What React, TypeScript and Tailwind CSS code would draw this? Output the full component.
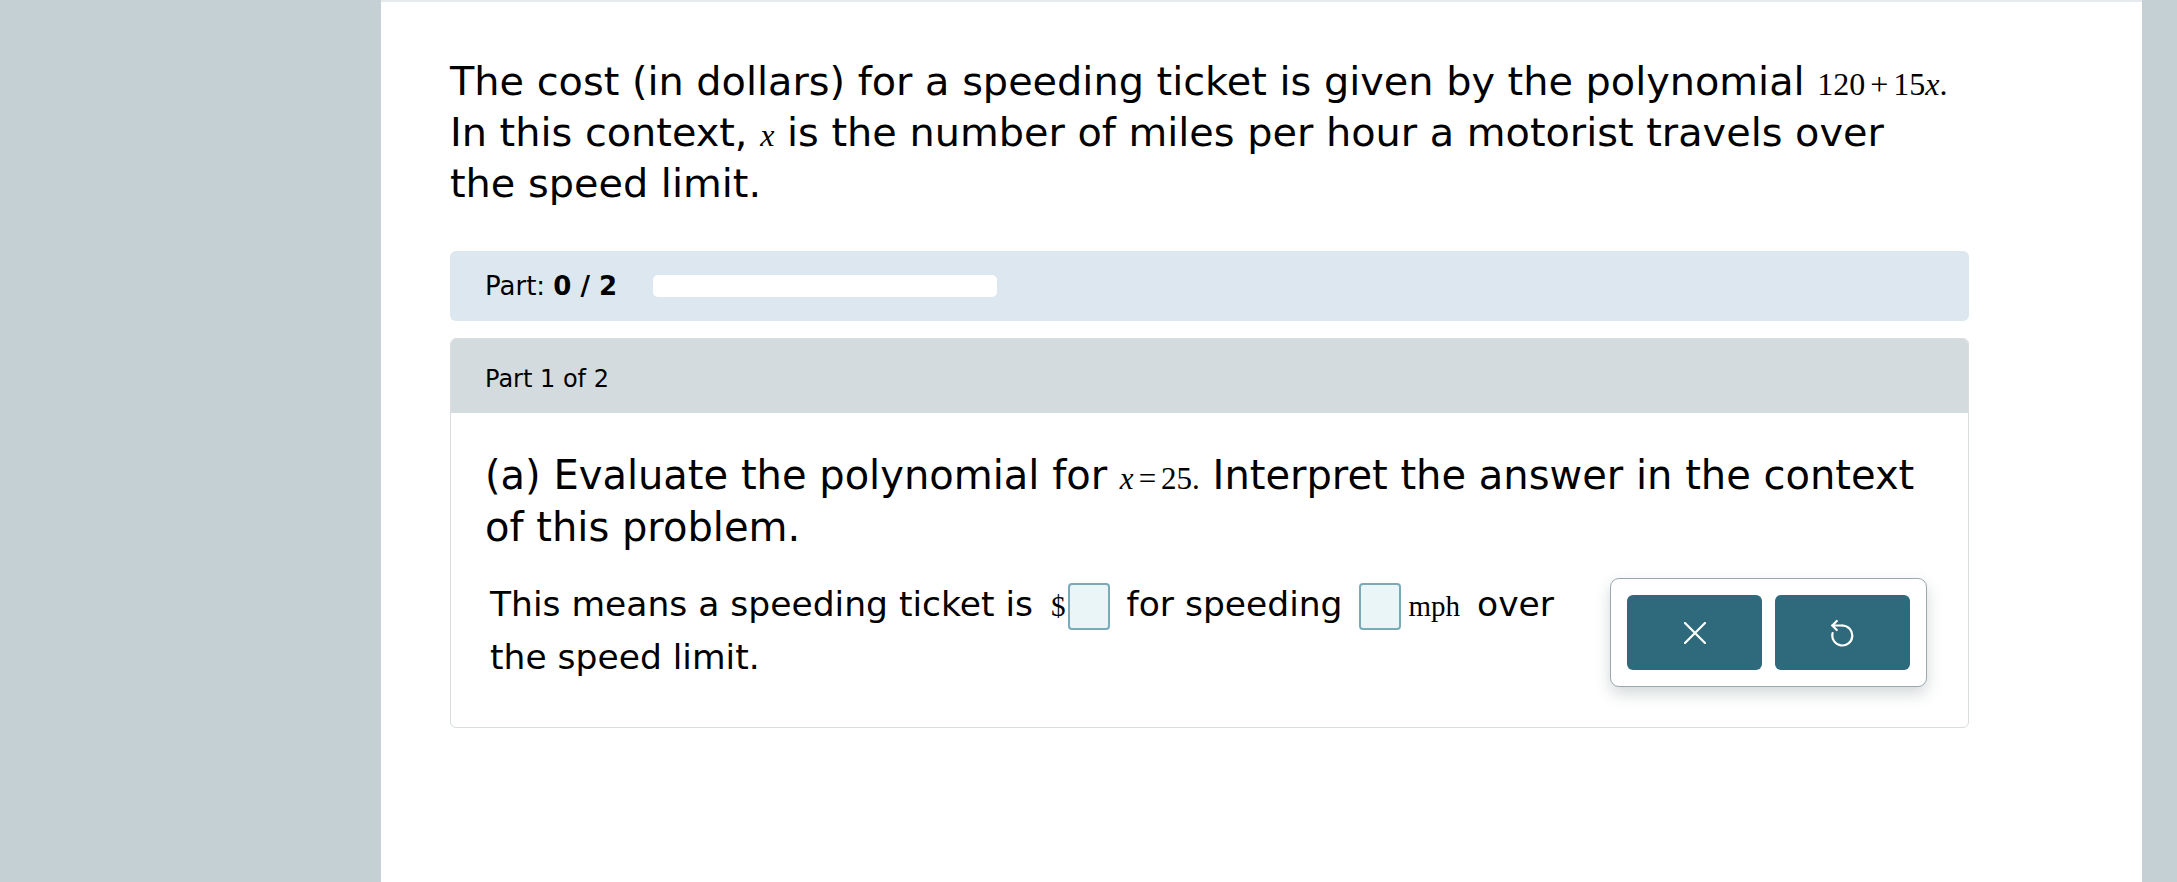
import React from 'react';

const serif = "font-['Liberation_Serif',serif] leading-none";

function AnswerBox({ className = '' }: { className?: string }) {
  return (
    <span
      className={`inline-block align-middle w-[42px] h-[47px] rounded-[4px] border-2 border-[#7aa9b8] bg-[#e9f5f7] ${className}`}
    />
  );
}

function UndoIcon() {
  return (
    <svg width="25" height="28" viewBox="-1 0 25 28" fill="none" stroke="white" strokeWidth="2.2" strokeLinecap="round" strokeLinejoin="round">
      <path d="M11.3 6.5 A10 10 0 1 1 1.6 14.1" />
      <path d="M1.3 6.5 H11.3" />
      <path d="M5.8 2 L1.3 6.5 L5.8 11" />
    </svg>
  );
}

export default function App() {
  return (
    <div className="flex min-h-[882px] bg-[#c5d0d5] font-['DejaVu_Sans',sans-serif] text-black">
      <aside className="w-[381px] shrink-0" />
      <main className="flex-1 bg-white border-t-2 border-[#e6eaec] pl-[69px] pr-[173px] pt-[54px]">
        <p className="text-[39.8px] leading-[51px] mb-[42px]">
          The cost (in dollars) for a speeding ticket is given by the polynomial{' '}
          <span className={`${serif} text-[32px]`}>
            120<span className="mx-[5px]">+</span>15<i>x</i>.
          </span>
          <br />
          In this context, <i className={`${serif} text-[32px]`}>x</i> is the number of miles per hour a motorist travels over
          <br />
          the speed limit.
        </p>

        {/* progress */}
        <div className="h-[70px] rounded-[6px] bg-[#dde7ef] flex items-center pl-[35px]">
          <span className="text-[26px]">
            Part: <b>0 / 2</b>
          </span>
          <div className="ml-[36px] w-[344px] h-[22px] rounded-[5px] bg-white" />
        </div>

        <section className="mt-[17px] border border-[#d8dde0] rounded-[6px] overflow-hidden">
          <div className="h-[74px] bg-[#d3dbdf] px-[34px] pt-[22px] text-[24px] leading-normal">Part 1 of 2</div>
          <div className="px-[34px] pt-[36px] pb-[40px]">
            <p className="text-[40px] leading-[52px]">
              (a) Evaluate the polynomial for{' '}
              <span className={`${serif} text-[31px]`}>
                <i>x</i>
                <span className="mx-[5px]">=</span>25.
              </span>{' '}
              Interpret the answer in the context
              <br />
              of this problem.
            </p>
            <div className="mt-[25px] flex items-start justify-between pr-[7px]">
              <p className="ml-[5px] text-[34.5px] leading-[53px]">
                <span>This means a speeding ticket is</span>
                <span className={`${serif} text-[29px] ml-[18px]`}>$</span>
                <AnswerBox className="ml-[2px]" />
                <span className="ml-[17px]">for speeding</span>
                <AnswerBox className="ml-[16px]" />
                <span className={`${serif} text-[29px] ml-[8px]`}>mph</span>
                <span className="ml-[17px]">over</span>
                <br />
                the speed limit.
              </p>
              <div className="flex gap-[13px] p-[16px] border border-[#9aa7ad] rounded-[9px] bg-white shadow-[0_7px_16px_rgba(40,60,70,0.2)]">
                <button className="w-[135px] h-[75px] rounded-[6px] bg-[#2e6a7b] flex items-center justify-center" aria-label="Clear">
                  <svg width="22" height="22" viewBox="0 0 22 22" fill="none">
                    <path d="M1 1L21 21M21 1L1 21" stroke="white" strokeWidth="2.2" strokeLinecap="round" />
                  </svg>
                </button>
                <button className="w-[135px] h-[75px] rounded-[6px] bg-[#2e6a7b] flex items-center justify-center" aria-label="Undo">
                  <UndoIcon />
                </button>
              </div>
            </div>
          </div>
        </section>
      </main>
      <div className="w-[35px] shrink-0" />
    </div>
  );
}
